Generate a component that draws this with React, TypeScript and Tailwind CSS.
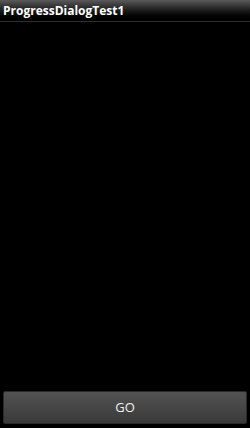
export default function App() {
  return (
    <div className="w-[250px] h-[428px] bg-black flex flex-col font-['Open_Sans','DejaVu_Sans',sans-serif]">
      <div className="h-[22px] bg-gradient-to-b from-[#5a5a5a] via-[#1c1c1c] to-[#000] border-b border-[#2e2e2e] flex items-center px-[3px]">
        <span className="text-white text-[12px] font-bold leading-none">ProgressDialogTest1</span>
      </div>
      <div className="flex-1" />
      <div className="px-[3px] pb-[4px]">
        <button className="w-full h-[33px] rounded-[2px] bg-gradient-to-b from-[#525252] to-[#3a3a3a] border border-[#2a2a2a] text-[#f0f0f0] text-[13px]">
          GO
        </button>
      </div>
    </div>
  );
}
